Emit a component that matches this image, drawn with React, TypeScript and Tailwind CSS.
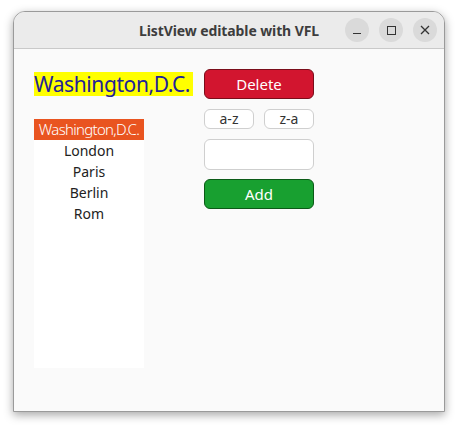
import React from "react";

export default function App() {
  const items = ["Washington,D.C.", "London", "Paris", "Berlin", "Rom"];
  return (
    <div
      className="w-[458px] h-[429px] bg-white pt-[11px] pl-[13px]"
      style={{ fontFamily: '"Noto Sans", "Open Sans", sans-serif' }}
    >
      <div className="w-[432px] h-[401px] rounded-t-[12px] border border-[#9a9a9a] bg-[#fafafa] shadow-[0_3px_10px_rgba(0,0,0,0.35)] flex flex-col overflow-hidden">
        <div className="h-[37px] shrink-0 bg-[#ebebeb] border-b border-[#c9c9c9] flex items-center relative">
          <div className="absolute left-0 right-0 top-0 bottom-0 flex items-center justify-center">
            <span className="text-[14px] font-bold text-[#3d3d3d] tracking-[-0.1px]">ListView editable with VFL</span>
          </div>
          <div className="ml-auto mr-[7px] flex items-center gap-[10px] relative">
            <div className="w-[24px] h-[24px] rounded-full bg-[#dadada] flex items-center justify-center">
              <div className="w-[8px] h-[1px] bg-[#333] mt-[7px]" />
            </div>
            <div className="w-[24px] h-[24px] rounded-full bg-[#dadada] flex items-center justify-center">
              <div className="w-[9px] h-[9px] border border-[#333]" />
            </div>
            <div className="w-[24px] h-[24px] rounded-full bg-[#dadada] flex items-center justify-center">
              <svg width="10" height="10" viewBox="0 0 10 10">
                <path d="M1 1 L9 9 M9 1 L1 9" stroke="#333" strokeWidth="1.3" />
              </svg>
            </div>
          </div>
        </div>
        <div className="flex pl-[20px] pt-[20px]">
          <div className="w-[170px] flex flex-col">
            <div className="mt-[3px] h-[24px] w-[159px] bg-[#ffff00] text-[#22229a] text-[21px] leading-[24px] whitespace-nowrap tracking-[-0.4px]">
              Washington,D.C.
            </div>
            <div className="mt-[23px] w-[110px] h-[249px] bg-white flex flex-col">
              {items.map((it, i) => (
                <div
                  key={it}
                  className={
                    i === 0
                      ? "h-[21px] bg-[#e95420] text-white text-[15px] leading-[21px] text-center whitespace-nowrap tracking-[-0.7px] font-light"
                      : "h-[21px] text-[#222] text-[14px] leading-[21px] text-center"
                  }
                >
                  {it}
                </div>
              ))}
            </div>
          </div>
          <div className="w-[110px] flex flex-col">
            <button className="h-[30px] rounded-[6px] bg-[#d2152f] border border-[#7a0d1a] text-white text-[15px]">
              Delete
            </button>
            <div className="mt-[10px] flex justify-between">
              <button className="w-[50px] h-[20px] rounded-[6px] bg-white border border-[#cfcfcf] text-[#333] text-[14px] leading-[18px]">
                a-z
              </button>
              <button className="w-[50px] h-[20px] rounded-[6px] bg-white border border-[#cfcfcf] text-[#333] text-[14px] leading-[18px]">
                z-a
              </button>
            </div>
            <div className="mt-[10px] h-[31px] rounded-[6px] bg-white border border-[#cfcfcf]" />
            <button className="mt-[9px] h-[30px] rounded-[6px] bg-[#18a030] border border-[#0b5a17] text-white text-[15px]">
              Add
            </button>
          </div>
        </div>
      </div>
    </div>
  );
}
